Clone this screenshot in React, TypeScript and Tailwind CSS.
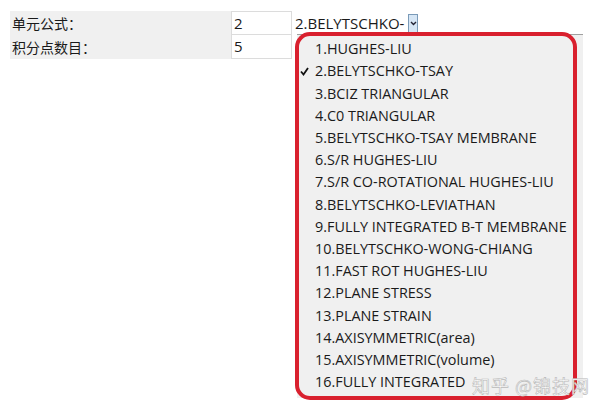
import React from "react";

const items = [
  "1.HUGHES-LIU",
  "2.BELYTSCHKO-TSAY",
  "3.BCIZ TRIANGULAR",
  "4.C0 TRIANGULAR",
  "5.BELYTSCHKO-TSAY MEMBRANE",
  "6.S/R HUGHES-LIU",
  "7.S/R CO-ROTATIONAL HUGHES-LIU",
  "8.BELYTSCHKO-LEVIATHAN",
  "9.FULLY INTEGRATED B-T MEMBRANE",
  "10.BELYTSCHKO-WONG-CHIANG",
  "11.FAST ROT HUGHES-LIU",
  "12.PLANE STRESS",
  "13.PLANE STRAIN",
  "14.AXISYMMETRIC(area)",
  "15.AXISYMMETRIC(volume)",
  "16.FULLY INTEGRATED",
];

const latin = { fontFamily: '"Open Sans", "Noto Sans", sans-serif' };
const cjk = { fontFamily: '"Noto Sans CJK SC", "Noto Sans", sans-serif' };

export default function App() {
  return (
    <div className="relative w-[600px] h-[414px] bg-white overflow-hidden text-[#1a1a1a]">
      <div className="pt-[11px] pl-[10px] flex flex-col">
        <div className="flex h-[24px]">
          <div className="w-[221px] bg-[#f0f0f0] flex items-center pl-[2px] text-[14px]" style={cjk}>
            单元公式：
          </div>
          <div className="w-[61px] bg-white border border-[#dcdcdc] flex items-center pl-[2px] text-[15px]" style={latin}>
            2
          </div>
          <div className="w-[126px] bg-white flex items-center pl-[3px] text-[15px]" style={latin}>
            <span>2.BELYTSCHKO-</span>
            <div className="ml-[4px] w-[11px] h-[19px] bg-[#d6e6f5] border border-[#7a9ab8] flex items-center justify-center">
              <svg width="7" height="5" viewBox="0 0 7 5">
                <path d="M1 1 L3.5 3.5 L6 1" stroke="#223" strokeWidth="1.4" fill="none" />
              </svg>
            </div>
          </div>
        </div>
        <div className="flex h-[24px]">
          <div className="w-[221px] bg-[#f0f0f0] flex items-center pl-[2px] text-[14px]" style={cjk}>
            积分点数目：
          </div>
          <div className="w-[61px] bg-white border border-[#dcdcdc] border-t-0 flex items-center pl-[2px] text-[15px]" style={latin}>
            5
          </div>
        </div>
      </div>

      {/* dropdown menu */}
      <div
        className="absolute left-[297px] top-[34px] w-[286px] h-[364px] bg-[#f0f0f0] border-t border-[#a0a0a0] pt-[3px] text-[14.4px]"
        style={latin}
      >
        {items.map((t, i) => (
          <div key={t} className="relative h-[22.2px] flex items-center pl-[18px]">
            {i === 1 && (
              <svg className="absolute left-[3px] top-[7px]" width="9" height="9" viewBox="0 0 9 9">
                <path d="M1 4.5 L3.5 7.5 L8 1" stroke="#111" strokeWidth="1.8" fill="none" />
              </svg>
            )}
            {t}
          </div>
        ))}
      </div>

      {/* red annotation */}
      <div className="absolute left-[295px] top-[32px] w-[282px] h-[368px] border-[4px] border-[#d9202e] rounded-[15px]" />

      {/* watermark */}
      <div
        className="absolute left-[472px] top-[372px] text-[18px] text-white tracking-[1px]"
        style={{ ...cjk, WebkitTextStroke: "0.6px #b8b8b8" }}
      >
        知乎 @锦技网
      </div>
    </div>
  );
}
